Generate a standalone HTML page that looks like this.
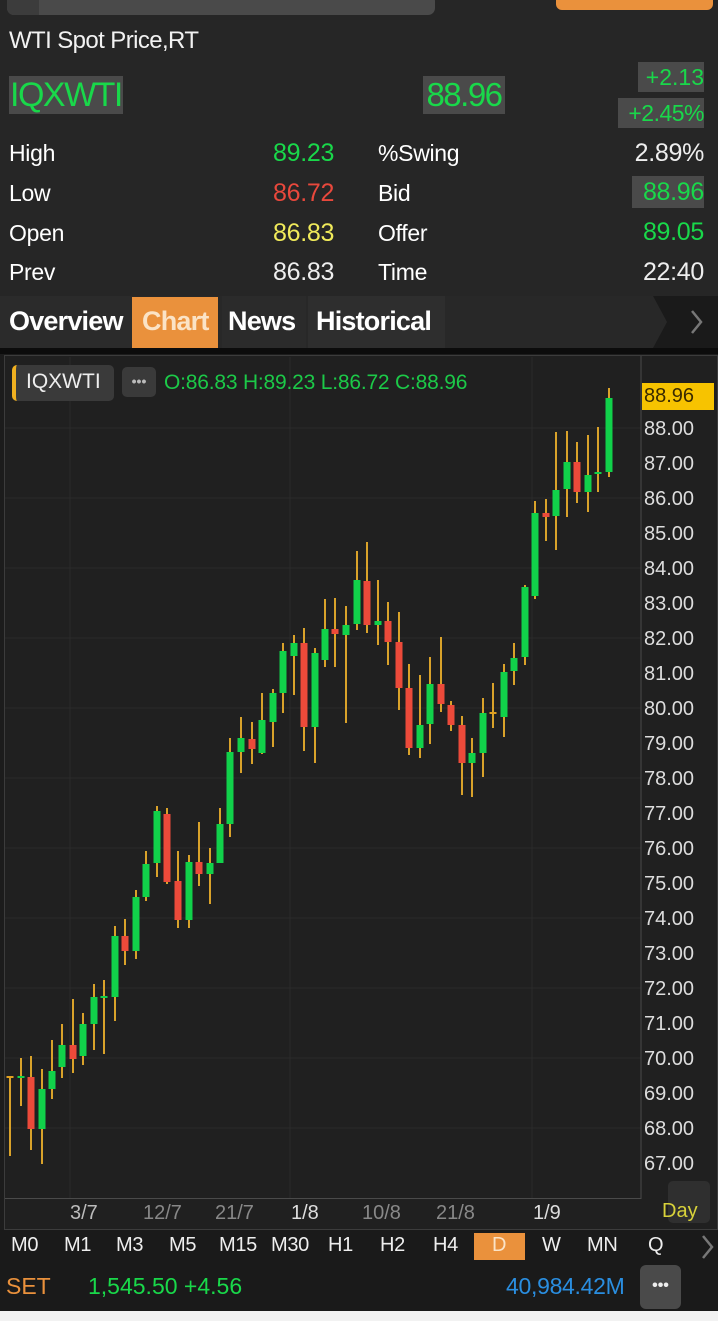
<!DOCTYPE html>
<html><head><meta charset="utf-8">
<style>
*{margin:0;padding:0;box-sizing:border-box}
body{width:718px;height:1321px;background:#262626;font-family:"Liberation Sans",sans-serif;position:relative;overflow:hidden;color:#fff}
.a{position:absolute;white-space:nowrap}
.g{color:#19d84a}
.hl{background:#4a4a4a}
.row{font-size:23px;letter-spacing:-0.3px}
</style></head><body>
<div class="a" style="left:7px;top:-6px;width:428px;height:21px;background:#4a4a4a;border-radius:7px"></div>
<div class="a" style="left:7px;top:-6px;width:32px;height:21px;background:#3c3c3c;border-radius:7px 0 0 7px"></div>
<div class="a" style="left:556px;top:-6px;width:157px;height:16px;background:#ea913c;border-radius:6px"></div>

<div class="a" style="left:9px;top:27px;font-size:24px;letter-spacing:-0.6px;color:#f2f2f2">WTI Spot Price,RT</div>
<div class="a g hl" style="left:9px;top:76px;height:38px;padding:0 1px;font-size:34px;line-height:38px;letter-spacing:-1.5px">IQXWTI</div>
<div class="a g hl" style="left:423px;top:76px;height:38px;width:82px;font-size:33px;line-height:38px;letter-spacing:-1.5px;text-align:center">88.96</div>
<div class="a g hl" style="left:638px;top:62px;height:30px;width:66px;font-size:23px;line-height:30px;text-align:right">+2.13</div>
<div class="a g hl" style="left:618px;top:98px;height:30px;width:86px;font-size:23px;line-height:30px;text-align:right;letter-spacing:-0.5px">+2.45%</div>

<div class="a row" style="left:9px;top:140px">High</div>
<div class="a row" style="left:9px;top:180px">Low</div>
<div class="a row" style="left:9px;top:220px">Open</div>
<div class="a row" style="left:9px;top:259px">Prev</div>
<div class="a row g" style="left:273px;top:139px;font-size:25px">89.23</div>
<div class="a row" style="left:273px;top:179px;font-size:25px;color:#e8483c">86.72</div>
<div class="a row" style="left:273px;top:219px;font-size:25px;color:#f0ea5a">86.83</div>
<div class="a row" style="left:273px;top:258px;font-size:25px;color:#eee">86.83</div>
<div class="a row" style="left:378px;top:140px">%Swing</div>
<div class="a row" style="left:378px;top:180px">Bid</div>
<div class="a row" style="left:378px;top:220px">Offer</div>
<div class="a row" style="left:378px;top:259px">Time</div>
<div class="a row" style="right:14px;top:139px;font-size:25px;color:#eee">2.89%</div>
<div class="a row g hl" style="left:632px;top:176px;width:72px;height:32px;font-size:25px;line-height:32px;text-align:right">88.96</div>
<div class="a row g" style="right:14px;top:218px;font-size:25px">89.05</div>
<div class="a row" style="right:14px;top:258px;font-size:25px;color:#eee">22:40</div>

<div class="a" style="left:0;top:296px;width:718px;height:52px;background:#282828"></div>
<div class="a" style="left:0;top:296px;width:132px;height:52px;background:#2b2b2b"></div>
<div class="a" style="left:132px;top:297px;width:86px;height:51px;background:#ea913c"></div>
<div class="a" style="left:222px;top:296px;width:84px;height:52px;background:#2b2b2b"></div>
<div class="a" style="left:308px;top:296px;width:137px;height:52px;background:#2e2e2e"></div>
<svg class="a" style="left:645px;top:296px" width="73" height="52"><polygon points="8,0 73,0 73,52 8,52 22,26" fill="#1a1a1a"/><path d="M47 15 L56 26 L47 37" stroke="#777" stroke-width="2.5" fill="none"/></svg>
<div class="a" style="left:9px;top:306px;font-size:27px;font-weight:bold;letter-spacing:-0.8px">Overview</div>
<div class="a" style="left:142px;top:306px;font-size:27px;font-weight:bold;letter-spacing:-0.8px;color:#fbe3c6">Chart</div>
<div class="a" style="left:228px;top:306px;font-size:27px;font-weight:bold;letter-spacing:-0.8px">News</div>
<div class="a" style="left:316px;top:306px;font-size:27px;font-weight:bold;letter-spacing:-0.8px">Historical</div>

<div class="a" style="left:0;top:348px;width:718px;height:6px;background:#0c0c0c"></div>
<div class="a" style="left:0;top:354px;width:718px;height:876px;background:#1c1c1c"></div>
<div class="a" style="left:4px;top:355px;width:714px;height:875px;border:1px solid #3c3c3c;background:#202020"></div>
<svg class="a" style="left:0;top:0" width="718" height="1230">
<g stroke="#2a2a2a" stroke-width="1">
<line x1="70" y1="357" x2="70" y2="1198"/><line x1="290" y1="357" x2="290" y2="1198"/><line x1="532" y1="357" x2="532" y2="1198"/>
<line x1="5" y1="428" x2="641" y2="428"/><line x1="5" y1="498" x2="641" y2="498"/><line x1="5" y1="568" x2="641" y2="568"/><line x1="5" y1="638" x2="641" y2="638"/><line x1="5" y1="708" x2="641" y2="708"/><line x1="5" y1="778" x2="641" y2="778"/><line x1="5" y1="848" x2="641" y2="848"/><line x1="5" y1="918" x2="641" y2="918"/><line x1="5" y1="988" x2="641" y2="988"/><line x1="5" y1="1058" x2="641" y2="1058"/><line x1="5" y1="1128" x2="641" y2="1128"/>
</g>
<line x1="641" y1="356" x2="641" y2="1199" stroke="#4a4a4a"/>
<line x1="5" y1="1198.5" x2="641" y2="1198.5" stroke="#4a4a4a"/>
</svg>
<svg class="a" style="left:0;top:0" width="718" height="1230" id="cs"></svg>

<div class="a" style="left:12px;top:365px;width:102px;height:36px;background:#3a3a3a;border-radius:5px;border-left:4px solid #f0b020"></div>
<div class="a" style="left:26px;top:370px;font-size:21px;color:#eee">IQXWTI</div>
<div class="a" style="left:122px;top:367px;width:34px;height:30px;background:#3a3a3a;border-radius:5px;color:#bbb;font-size:14px;text-align:center;line-height:28px;font-weight:bold">•••</div>
<div class="a g" style="left:164px;top:371px;font-size:21px;letter-spacing:-0.2px;color:#1cc948">O:86.83 H:89.23 L:86.72 C:88.96</div>

<div class="a" style="left:642px;top:383px;width:72px;height:27px;background:#f7c300"></div>
<div class="a" style="left:644px;top:385px;font-size:20px;color:#3a2a00">88.96</div>
<div class="a" style="left:644px;top:412px;font-size:20px;line-height:35px;color:#ddd;white-space:pre">88.00
87.00
86.00
85.00
84.00
83.00
82.00
81.00
80.00
79.00
78.00
77.00
76.00
75.00
74.00
73.00
72.00
71.00
70.00
69.00
68.00
67.00</div>
<div class="a" style="left:668px;top:1181px;width:42px;height:42px;background:#333;border-radius:5px;opacity:.85"></div>
<div class="a" style="left:662px;top:1200px;font-size:20px;color:#d8d23a">Day</div>

<div class="a" style="left:70px;top:1202px;font-size:20px;color:#bbb">3/7</div>
<div class="a" style="left:143px;top:1202px;font-size:20px;color:#888">12/7</div>
<div class="a" style="left:215px;top:1202px;font-size:20px;color:#888">21/7</div>
<div class="a" style="left:291px;top:1202px;font-size:20px;color:#ddd">1/8</div>
<div class="a" style="left:362px;top:1202px;font-size:20px;color:#888">10/8</div>
<div class="a" style="left:436px;top:1202px;font-size:20px;color:#888">21/8</div>
<div class="a" style="left:533px;top:1202px;font-size:20px;color:#ddd">1/9</div>

<div class="a" style="left:0;top:1230px;width:718px;height:33px;background:#1a1a1a"></div>
<div class="a" style="left:474px;top:1233px;width:51px;height:27px;background:#ea913c"></div>
<div class="a" style="top:1234px;left:0;font-size:20px;color:#eee;letter-spacing:-0.3px">
<span class="a" style="left:11px">M0</span><span class="a" style="left:64px">M1</span><span class="a" style="left:116px">M3</span><span class="a" style="left:169px">M5</span><span class="a" style="left:219px">M15</span><span class="a" style="left:271px">M30</span><span class="a" style="left:328px">H1</span><span class="a" style="left:380px">H2</span><span class="a" style="left:433px">H4</span><span class="a" style="left:492px;color:#fbe3c6">D</span><span class="a" style="left:542px">W</span><span class="a" style="left:587px">MN</span><span class="a" style="left:648px">Q</span></div>
<svg class="a" style="left:698px;top:1232px" width="20" height="30"><path d="M5 4 L14 15 L5 26" stroke="#777" stroke-width="2.5" fill="none"/></svg>

<div class="a" style="left:0;top:1263px;width:718px;height:48px;background:#1a1a1a"></div>
<div class="a" style="left:6px;top:1273px;font-size:23px;color:#ea913c">SET</div>
<div class="a" style="left:88px;top:1273px;font-size:23px;color:#19d84a">1,545.50 +4.56</div>
<div class="a" style="left:506px;top:1273px;font-size:23px;color:#2a8ee0;letter-spacing:-0.3px">40,984.42M</div>
<div class="a" style="left:640px;top:1265px;width:41px;height:44px;background:#4a4a4a;border-radius:6px;color:#eee;font-size:16px;text-align:center;line-height:42px;font-weight:bold">•••</div>
<div class="a" style="left:0;top:1311px;width:718px;height:10px;background:#f2f2f2"></div>

<script>
var d=[
[10,1076,1156,1077,1077,'o'],[21,1058,1106,1077,1077,'g'],[31,1056,1150,1077,1129,'r'],[42,1069,1164,1089,1129,'g'],
[52,1040,1099,1071,1089,'g'],[62,1024,1078,1045,1067,'g'],[73,999,1073,1045,1059,'r'],[83,1013,1065,1024,1056,'g'],
[94,984,1050,997,1024,'g'],[104,980,1054,997,997,'g'],[115,926,1021,936,997,'g'],[125,919,965,936,951,'r'],
[136,890,959,897,951,'g'],[146,851,901,864,897,'g'],[157,806,877,811,863,'g'],[167,808,884,814,882,'r'],
[178,851,928,881,920,'r'],[189,855,928,862,920,'g'],[199,822,886,862,874,'r'],[210,848,904,863,874,'g'],
[220,808,863,824,863,'g'],[230,738,837,752,824,'g'],[241,717,773,738,752,'g'],[252,722,764,739,749,'r'],
[262,693,754,720,753,'g'],[273,689,747,693,722,'g'],[283,643,713,651,693,'g'],[294,635,695,643,656,'g'],
[304,628,751,643,727,'r'],[315,648,763,653,727,'g'],[325,599,667,629,660,'g'],[335,598,667,629,634,'r'],
[346,606,723,625,635,'g'],[357,551,630,580,624,'g'],[367,542,633,581,625,'r'],[378,580,645,621,625,'g'],
[388,602,665,621,642,'r'],[399,612,710,642,688,'r'],[409,664,755,688,748,'r'],[420,675,758,725,748,'g'],
[430,657,744,684,724,'g'],[441,637,712,684,704,'r'],[451,701,731,705,725,'r'],[462,716,795,725,763,'r'],
[472,738,797,753,763,'g'],[483,698,777,713,753,'g'],[493,683,728,713,713,'o'],[504,664,737,672,717,'g'],
[514,643,685,658,671,'g'],[525,585,665,587,657,'g'],[535,501,599,513,596,'g'],[546,499,541,513,517,'r'],
[556,432,550,490,516,'g'],[567,431,517,462,489,'g'],[577,442,503,462,492,'r'],[588,435,512,475,492,'g'],
[598,427,492,473,473,'g'],[609,388,477,398,472,'g']];
var s='',col={g:'#11d14a',r:'#ec4a3a',o:'#e0a020'};
d.forEach(function(c){s+='<line x1="'+c[0]+'" x2="'+c[0]+'" y1="'+c[1]+'" y2="'+c[2]+'" stroke="#d9a22a" stroke-width="2"/>';
var h=Math.max(c[4]-c[3],2);s+='<rect x="'+(c[0]-3.5)+'" y="'+(c[3]-(h==2?1:0))+'" width="7" height="'+h+'" fill="'+col[c[5]]+'"/>';});
document.getElementById('cs').innerHTML=s;
</script>
</body></html>
